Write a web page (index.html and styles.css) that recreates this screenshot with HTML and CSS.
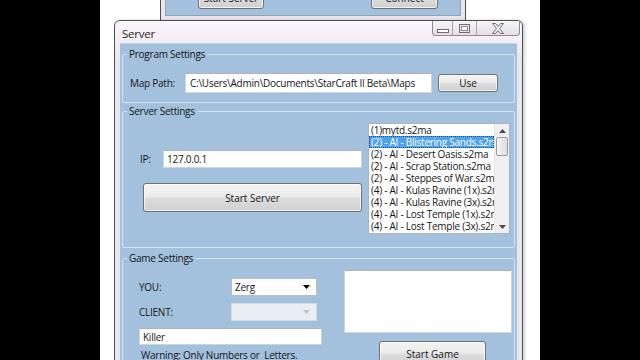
FILE: index.html
```html
<!DOCTYPE html>
<html>
<head>
  <title>Server</title>
  <link rel="stylesheet" href="styles.css">
</head>
<body>
  <div class="desktop">

    <div class="window back-window">
      <div class="back-client">
        <button class="btn back-start">Start Server</button>
        <button class="btn back-connect">Connect</button>
      </div>
    </div>

    <div class="window main-window">
      <div class="titlebar">
        <span class="title">Server</span>
        <div class="caption-buttons">
          <span class="cap cap-min">
            <svg width="12" height="6" viewBox="0 0 12 6"><rect x="0.5" y="1.5" width="11" height="3" fill="#fff" stroke="#6d6d6d"/></svg>
          </span>
          <span class="cap cap-max">
            <svg width="11" height="9" viewBox="0 0 11 9"><rect x="0.5" y="0.5" width="10" height="8" fill="none" stroke="#6d6d6d"/><rect x="2.5" y="2.5" width="6" height="4" fill="#fff" stroke="#8a8a8a"/></svg>
          </span>
          <span class="cap cap-close">
            <svg width="14" height="11" viewBox="0 0 14 11"><path d="M1.5 0.5h3l2.5 3 2.5-3h3l-4 5 4 5h-3l-2.5-3-2.5 3h-3l4-5z" fill="#f4f4f4" stroke="#6d6d6d" stroke-linejoin="round"/></svg>
          </span>
        </div>
      </div>

      <div class="client">
        <fieldset class="group group-program">
          <legend>Program Settings</legend>
          <div class="program-row">
            <span class="label map-label">Map Path:</span>
            <div class="textbox path-box">C:\Users\Admin\Documents\StarCraft II Beta\Maps</div>
            <button class="btn use-btn">Use</button>
          </div>
        </fieldset>

        <fieldset class="group group-server">
          <legend>Server Settings</legend>
          <div class="server-body">
            <div class="server-left">
              <div class="ip-row">
                <span class="label ip-label">IP:</span>
                <div class="textbox ip-box">127.0.0.1</div>
              </div>
              <button class="btn start-server">Start Server</button>
            </div>
            <div class="listbox">
              <ul class="map-list">
                <li>(1)mytd.s2ma</li>
                <li class="selected">(2) - AI - Blistering Sands.s2ma</li>
                <li>(2) - AI - Desert Oasis.s2ma</li>
                <li>(2) - AI - Scrap Station.s2ma</li>
                <li>(2) - AI - Steppes of War.s2ma</li>
                <li>(4) - AI - Kulas Ravine (1x).s2ma</li>
                <li>(4) - AI - Kulas Ravine (3x).s2ma</li>
                <li>(4) - AI - Lost Temple (1x).s2ma</li>
                <li>(4) - AI - Lost Temple (3x).s2ma</li>
              </ul>
              <div class="scrollbar">
                <span class="arrow">
                  <svg width="7" height="4" viewBox="0 0 7 4"><path d="M0 4L3.5 0 7 4z" fill="#4d4d4d"/></svg>
                </span>
                <span class="thumb"></span>
                <span class="track"></span>
                <span class="arrow">
                  <svg width="7" height="4" viewBox="0 0 7 4"><path d="M0 0L3.5 4 7 0z" fill="#4d4d4d"/></svg>
                </span>
              </div>
            </div>
          </div>
        </fieldset>

        <fieldset class="group group-game">
          <legend>Game Settings</legend>
          <div class="game-body">
            <div class="game-left">
              <div class="combo-row">
                <span class="label combo-label">YOU:</span>
                <div class="combo">
                  <span>Zerg</span>
                  <svg width="7" height="4" viewBox="0 0 7 4"><path d="M0 0L3.5 4 7 0z" fill="#000"/></svg>
                </div>
              </div>
              <div class="combo-row">
                <span class="label combo-label">CLIENT:</span>
                <div class="combo disabled">
                  <span></span>
                  <svg width="7" height="4" viewBox="0 0 7 4"><path d="M0 0L3.5 4 7 0z" fill="#b9c2ca"/></svg>
                </div>
              </div>
              <div class="textbox name-box">Killer</div>
              <div class="warning">Warning: Only Numbers or &nbsp;Letters.</div>
            </div>
            <div class="game-right">
              <div class="textbox log-box"></div>
              <button class="btn start-game">Start Game</button>
            </div>
          </div>
        </fieldset>
      </div>
    </div>

  </div>
</body>
</html>
```

FILE: styles.css
```css
:root {
  --client-blue: #a3c1dd;
  --group-line: #d3e3f0;
  --text-color: #161616;
  --frame-light: #ebe5ee;
  --frame-border: #4f4f4f;
}

body {
  margin: 0;
  width: 640px;
  height: 360px;
  background: #000;
  overflow: hidden;
  font-family: "Open Sans", "Noto Sans", sans-serif;
  font-size: 10px;
  letter-spacing: -0.25px;
  color: var(--text-color);
}

.desktop {
  position: relative;
  width: 440px;
  height: 360px;
  margin-left: 100px;
  background: #fff;
  overflow: hidden;
}

/* Windows */
.window {
  position: absolute;
  box-sizing: border-box;
  border: 1px solid var(--frame-border);
  background: linear-gradient(to bottom, #fcf7fb, var(--frame-light) 40px);
}

.back-window {
  left: 60px;
  top: -40px;
  width: 306px;
  height: 61px;
  padding: 0 4px 4px;
  display: flex;
}

.back-client {
  flex: 1;
  display: flex;
  align-items: flex-end;
  padding: 0 0 6px 32px;
  gap: 107px;
  background: var(--client-blue);
  border: 1px solid #8fa3b5;
}

.back-start {
  width: 66px;
  height: 22px;
}

.back-connect {
  width: 67px;
  height: 22px;
}

.main-window {
  left: 14px;
  top: 20px;
  width: 409px;
  height: 360px;
  border-radius: 6px 6px 0 0;
  padding: 0 5px;
  display: flex;
  flex-direction: column;
  box-shadow: 2px 0 3px rgba(0, 0, 0, 0.18);
}

.titlebar {
  height: 22px;
  display: flex;
  align-items: flex-start;
  flex-shrink: 0;
}

.title {
  margin: 5px 0 0 2px;
  font-size: 11.5px;
  color: #262626;
}

.caption-buttons {
  margin-left: auto;
  margin-right: -3px;
  display: flex;
  height: 14px;
  border: 1px solid #8c8c8c;
  border-top: none;
  border-radius: 0 0 4px 4px;
  background: linear-gradient(to bottom, #f7f5f8, #e3dfe6);
  overflow: hidden;
}

.cap {
  display: flex;
  align-items: center;
  justify-content: center;
  border-right: 1px solid #a8a4ab;
}

.cap:last-child {
  border-right: none;
}

.cap-min {
  width: 20px;
  align-items: flex-end;
  padding-bottom: 1px;
  box-sizing: border-box;
}

.cap-max {
  width: 23px;
}

.cap-close {
  width: 42px;
}

/* Client area */
.client {
  flex: 1;
  background: var(--client-blue);
  padding: 0 2px;
  border-top: 1px solid #c5d6e4;
}

.group {
  margin: 0;
  padding: 0;
  border: 1px solid var(--group-line);
  border-radius: 2px;
  min-width: 0;
}

.group legend {
  margin-left: 4px;
  padding: 0 2px;
  line-height: 14px;
  color: var(--text-color);
}

.group-program {
  margin-top: 3px;
}

.label {
  white-space: nowrap;
}

.textbox {
  box-sizing: border-box;
  background: #fff;
  border: 1px solid #c9d5df;
  border-top-color: #a9b6c2;
  padding: 0 3px;
  display: flex;
  align-items: center;
  white-space: nowrap;
  overflow: hidden;
}

.btn {
  box-sizing: border-box;
  margin: 0;
  padding: 0;
  font: inherit;
  color: var(--text-color);
  border: 1px solid #707070;
  border-radius: 3px;
  background: linear-gradient(to bottom, #f3f3f3 0%, #ebebeb 48%, #dddddd 52%, #cfcfcf 100%);
  box-shadow: inset 0 0 0 1px rgba(255, 255, 255, 0.7);
}

/* Program settings */
.program-row {
  display: flex;
  align-items: center;
  padding: 12px 0 9px 7px;
}

.map-label {
  width: 55px;
}

.path-box {
  width: 247px;
  height: 20px;
  padding-left: 4px;
}

.use-btn {
  width: 60px;
  height: 18px;
  margin-left: 6px;
}

/* Server settings */
.group-server {
  margin-top: 1px;
}

.server-body {
  display: flex;
  padding: 5px 4px 13px 17px;
}

.server-left {
  width: 222px;
  padding-top: 27px;
  display: flex;
  flex-direction: column;
}

.ip-row {
  display: flex;
  align-items: center;
}

.ip-label {
  width: 23px;
}

.ip-box {
  width: 199px;
  height: 18px;
}

.start-server {
  width: 219px;
  height: 29px;
  margin: 15px 0 0 3px;
}

.listbox {
  margin-left: 6px;
  width: 142px;
  height: 111px;
  box-sizing: border-box;
  background: #fff;
  border: 1px solid #a9b6c2;
  display: flex;
  overflow: hidden;
}

.map-list {
  list-style: none;
  margin: 0;
  padding: 0;
  flex: 1;
  min-width: 0;
}

.map-list li {
  height: 12px;
  line-height: 12px;
  padding-left: 2px;
  white-space: nowrap;
  overflow: hidden;
}

.map-list li.selected {
  background: #4ea3f0;
  color: #fff;
  outline: 1px dotted #1c4f80;
  outline-offset: -1px;
}

.scrollbar {
  width: 14px;
  flex-shrink: 0;
  display: flex;
  flex-direction: column;
  background: #f0f0f0;
  border-left: 1px solid #e4e4e4;
}

.scrollbar .arrow {
  height: 13px;
  display: flex;
  align-items: center;
  justify-content: center;
}

.scrollbar .thumb {
  height: 17px;
  margin: 0 1px;
  border: 1px solid #9b9b9b;
  border-radius: 2px;
  background: linear-gradient(to right, #f5f5f5, #dcdcdc);
}

.scrollbar .track {
  flex: 1;
}

/* Game settings */
.group-game {
  margin-top: 3px;
  height: 120px;
}

.game-body {
  display: flex;
  padding: 0 0 0 16px;
}

.game-left {
  width: 183px;
  display: flex;
  flex-direction: column;
}

.combo-row {
  display: flex;
  align-items: center;
  margin-top: 13px;
}

.combo-row + .combo-row {
  margin-top: 7px;
}

.combo-label {
  width: 92px;
}

.combo {
  box-sizing: border-box;
  width: 86px;
  height: 18px;
  background: #fff;
  border: 1px solid #b3bfca;
  display: flex;
  align-items: center;
  justify-content: space-between;
  padding: 0 6px 0 3px;
}

.combo.disabled {
  background: #e9eef2;
  border-color: #d4dce3;
}

.name-box {
  margin-top: 7px;
  width: 183px;
  height: 17px;
}

.warning {
  margin: 3px 0 0 2px;
  white-space: nowrap;
}

.game-right {
  margin-left: 22px;
  padding-top: 5px;
  display: flex;
  flex-direction: column;
}

.log-box {
  width: 168px;
  height: 63px;
}

.start-game {
  width: 107px;
  height: 25px;
  margin: 8px 0 0 35px;
}
```
